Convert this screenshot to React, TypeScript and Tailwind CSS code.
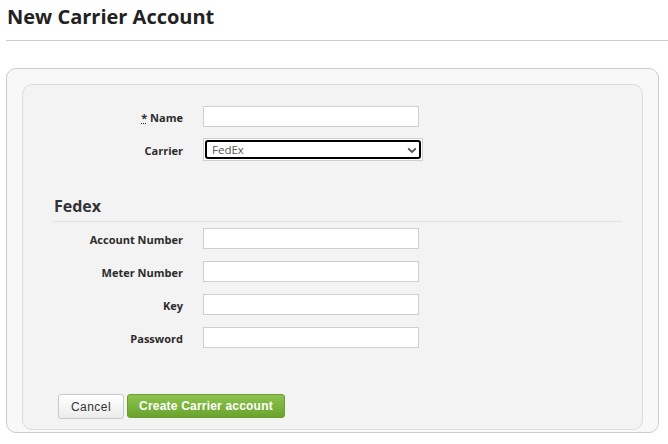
import React from "react";

const font = { fontFamily: '"Open Sans", "Liberation Sans", sans-serif' };

function Row({ label, children, className = "" }: { label: React.ReactNode; children: React.ReactNode; className?: string }) {
  return (
    <div className={`flex items-center ${className}`}>
      <div className="mt-[2px] w-[160px] text-right text-[11px] font-bold leading-[15px] text-[#2b2b2b]">{label}</div>
      <div className="ml-[20px]">{children}</div>
    </div>
  );
}

function TextInput() {
  return <input type="text" className="block h-[21px] w-[216px] border border-[#cfcfcf] bg-white outline-none" />;
}

export default function App() {
  return (
    <div className="min-h-[444px] w-[668px] bg-white" style={font}>
      <div className="ml-[6px] border-b border-[#cccccc] pb-[10px] pt-[3px]">
        <h1 className="pl-[1px] text-[20px] font-bold leading-[27px] text-[#222]">New Carrier Account</h1>
      </div>
      <div className="ml-[6px] mt-[27px] w-[653px] rounded-[10px] border border-[#cccccc] bg-[#f8f8f8] px-[15px] pb-[2px] pt-[15px]">
        <div className="rounded-[10px] border border-[#dddddd] bg-[#f3f3f3] pb-[10px] pt-[21px]">
          <Row label={<><abbr className="cursor-help underline decoration-dotted" title="required">*</abbr> Name</>}>
            <TextInput />
          </Row>
          <Row label="Carrier" className="mt-[11px]">
            <div className="h-[23px] w-[220px] border border-[#cfcfcf] bg-white p-[1px]">
              <div className="flex h-full items-center justify-between rounded-[3px] border-2 border-black bg-white pl-[5px] pr-[2px]">
                <span className="text-[11.5px] leading-none text-[#555]">FedEx</span>
                <svg width="10" height="7" viewBox="0 0 10 7" className="mt-[1px]">
                  <path d="M1.2 1.5 L5 5 L8.8 1.5" fill="none" stroke="#555" strokeWidth="1.7" />
                </svg>
              </div>
            </div>
          </Row>
          <div className="ml-[30px] mr-[20px] mt-[34px] border-b border-[#e2e2e2] pb-[4px]">
            <h2 className="pl-[1px] text-[16px] font-bold leading-[22px] text-[#333]">Fedex</h2>
          </div>
          <Row label="Account Number" className="mt-[6px]">
            <TextInput />
          </Row>
          <Row label="Meter Number" className="mt-[12px]">
            <TextInput />
          </Row>
          <Row label="Key" className="mt-[12px]">
            <TextInput />
          </Row>
          <Row label="Password" className="mt-[12px]">
            <TextInput />
          </Row>
          <div className="ml-[35px] mt-[46px] flex gap-[3px]" style={{ fontFamily: '"Liberation Sans", Arial, sans-serif' }}>
            <button className="h-[25px] w-[66px] rounded-[3px] border border-[#c8c8c8] bg-gradient-to-b from-[#ffffff] to-[#ececec] text-[12px] tracking-[0.45px] text-[#333]">
              Cancel
            </button>
            <button className="h-[24px] w-[158px] rounded-[3px] border border-[#6b9e2e] bg-gradient-to-b from-[#8cc34e] to-[#6aa32c] text-[12px] font-bold tracking-[0.2px] text-white">
              Create Carrier account
            </button>
          </div>
        </div>
      </div>
    </div>
  );
}
